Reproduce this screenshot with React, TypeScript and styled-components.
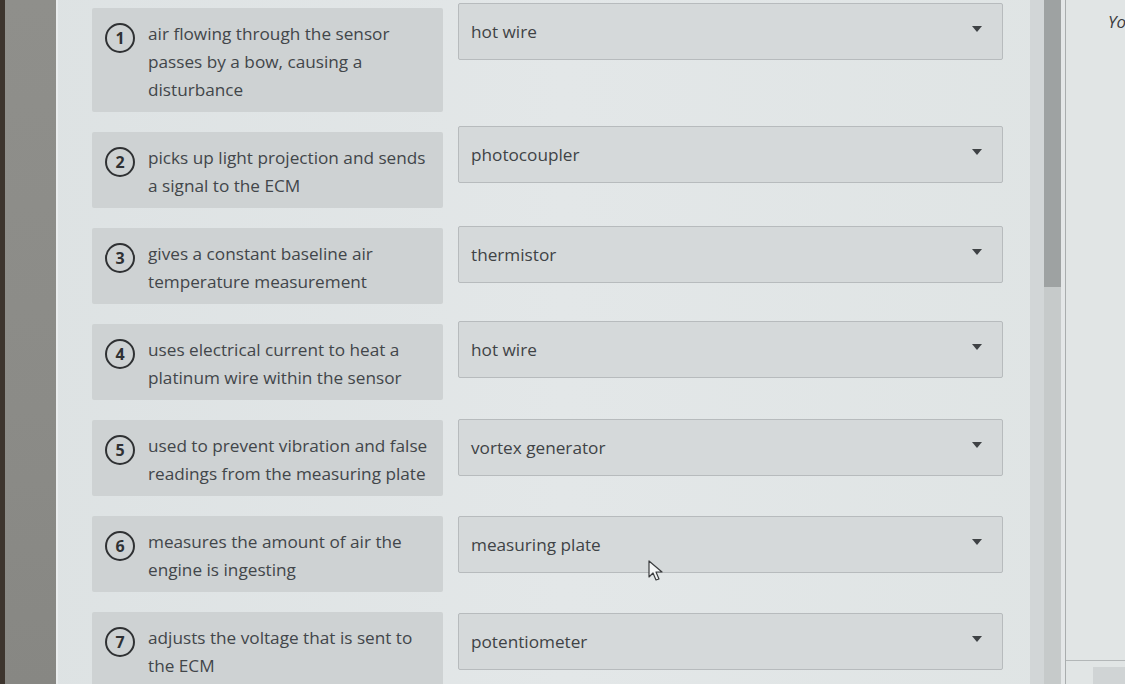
import React from "react";
import styled, { createGlobalStyle } from "styled-components";

const Global = createGlobalStyle`
  html, body { margin: 0; padding: 0; }
  body {
    background: #dfe4e5;
    font-family: "Open Sans", "Noto Sans", sans-serif;
    overflow: hidden;
  }
`;

const Page = styled.div`
  display: flex;
  width: 1125px;
  height: 684px;
  overflow: hidden;
  position: relative;
  background: linear-gradient(90deg, #dde2e3 0%, #e3e7e8 50%, #dfe4e4 100%);
`;

const Bezel = styled.div`
  width: 5px;
  flex: none;
  background: #3d352e;
`;

const SideStrip = styled.div`
  width: 51px;
  flex: none;
  background: linear-gradient(180deg, #8f8f8b 0%, #8b8b87 60%, #878783 100%);
  border-right: 2px solid #e9eced;
`;

const Main = styled.div`
  flex: none;
  width: 972px;
  padding: 8px 0 0 34px;
  display: flex;
  flex-direction: column;
  gap: 20px;
  box-sizing: border-box;
`;

const Row = styled.div`
  display: grid;
  grid-template-columns: 351px 545px;
  column-gap: 15px;
  align-items: start;
`;

const Card = styled.div`
  background: #ced2d3;
  border-radius: 2px;
  padding: 12px 4px 8px 12px;
  display: flex;
  align-items: flex-start;
  box-sizing: border-box;
`;

const Num = styled.div`
  flex: none;
  width: 26px;
  height: 26px;
  border: 2px solid #2f3133;
  border-radius: 50%;
  display: flex;
  align-items: center;
  justify-content: center;
  font-weight: 700;
  font-size: 16px;
  color: #2f3133;
  margin: 3px 13px 0 1px;
`;

const CardText = styled.div`
  width: 288px;
  font-size: 17.2px;
  line-height: 28px;
  color: #42464a;
`;

const Select = styled.div<{ $shift: number }>`
  margin-top: ${(p) => p.$shift}px;
  height: 57px;
  box-sizing: border-box;
  background: #d5d9da;
  border: 1px solid #b7bbbd;
  border-radius: 2px;
  display: flex;
  align-items: center;
  justify-content: space-between;
  padding: 0 20px 0 12px;
  font-size: 17.2px;
  color: #3f4346;
`;

const Caret = styled.span`
  width: 0;
  height: 0;
  border-left: 5px solid transparent;
  border-right: 5px solid transparent;
  border-top: 6px solid #3f4245;
  margin-top: -6px;
`;

const ScrollArea = styled.div`
  flex: none;
  width: 36px;
  display: flex;
  background: #d7dbdc;
`;

const TrackGap = styled.div`
  width: 14px;
  background: #d2d6d7;
`;

const Track = styled.div`
  width: 18px;
  background: #c6caca;
  display: flex;
  flex-direction: column;
`;

const Thumb = styled.div`
  height: 287px;
  background: #9ea2a2;
`;

const TrackEdge = styled.div`
  width: 4px;
  background: #e4e7e8;
  border-right: 1px solid #a9adae;
`;

const RightPanel = styled.div`
  flex: 1;
  display: flex;
  flex-direction: column;
  background: #e1e5e5;
`;

const PanelTop = styled.div`
  flex: none;
  height: 661px;
  padding: 10px 0 0 42px;
  font-style: italic;
  font-size: 17px;
  color: #3a3c3e;
  border-bottom: 1px solid #b3b7b8;
  box-sizing: border-box;
  overflow: hidden;
`;

const PanelBottom = styled.div`
  flex: 1;
  display: flex;
  justify-content: flex-end;
  align-items: flex-end;
`;

const MiniBox = styled.div`
  width: 33px;
  height: 17px;
  background: #d0d4d5;
`;

const Cursor = styled.svg`
  position: absolute;
  left: 648px;
  top: 560px;
`;

const items = [
  {
    text: "air flowing through the sensor passes by a bow, causing a disturbance",
    value: "hot wire",
    shift: -5,
  },
  { text: "picks up light projection and sends a signal to the ECM", value: "photocoupler", shift: -6 },
  { text: "gives a constant baseline air temperature measurement", value: "thermistor", shift: -2 },
  { text: "uses electrical current to heat a platinum wire within the sensor", value: "hot wire", shift: -3 },
  { text: "used to prevent vibration and false readings from the measuring plate", value: "vortex generator", shift: -1 },
  { text: "measures the amount of air the engine is ingesting", value: "measuring plate", shift: 0 },
  { text: "adjusts the voltage that is sent to the ECM", value: "potentiometer", shift: 1 },
];

export default function App() {
  return (
    <>
      <Global />
      <Page>
        <Bezel />
        <SideStrip />
        <Main>
          {items.map((it, i) => (
            <Row key={i}>
              <Card>
                <Num>{i + 1}</Num>
                <CardText>{it.text}</CardText>
              </Card>
              <Select $shift={it.shift}>
                <span>{it.value}</span>
                <Caret />
              </Select>
            </Row>
          ))}
        </Main>
        <ScrollArea>
          <TrackGap />
          <Track>
            <Thumb />
          </Track>
          <TrackEdge />
        </ScrollArea>
        <RightPanel>
          <PanelTop>Yo</PanelTop>
          <PanelBottom>
            <MiniBox />
          </PanelBottom>
        </RightPanel>
        <Cursor width="16" height="22" viewBox="0 0 16 22">
          <path d="M1 1 L1 17 L5 13 L8 20 L11 19 L8 12 L14 12 Z" fill="#f4f6f6" stroke="#3a3c3e" strokeWidth="1.2" strokeLinejoin="round" />
        </Cursor>
      </Page>
    </>
  );
}
